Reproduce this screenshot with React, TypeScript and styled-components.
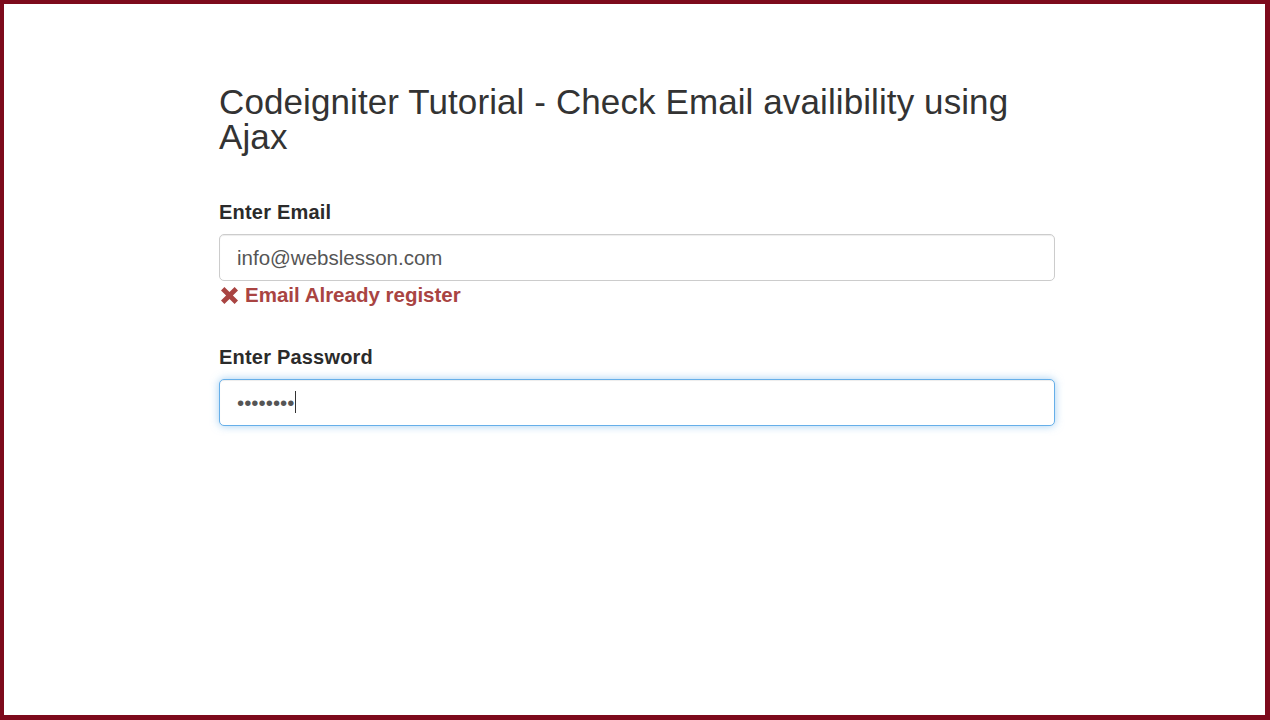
import React from "react";
import styled, { createGlobalStyle } from "styled-components";

const GlobalStyle = createGlobalStyle`
  html, body {
    margin: 0;
    padding: 0;
    background: #ffffff;
  }
  body {
    font-family: "Liberation Sans", Arial, sans-serif;
    color: #333;
  }
  * {
    box-sizing: border-box;
  }
`;

const Frame = styled.div`
  width: 1270px;
  height: 720px;
  border-style: solid;
  border-color: #7d0a1c;
  border-width: 4px 5px 5px 4px;
  background: #ffffff;
  overflow: hidden;
`;

const Container = styled.div`
  width: 836px;
  margin: 0 0 0 215px;
  padding-top: 80px;
`;

const Title = styled.h3`
  margin: 0 0 46px;
  font-size: 35px;
  font-weight: 400;
  letter-spacing: 0.1px;
  line-height: 35px;
  color: #333;
`;

const FormGroup = styled.div`
  margin-bottom: 38px;
`;

const Label = styled.label`
  display: block;
  font-size: 20px;
  font-weight: 700;
  letter-spacing: 0.2px;
  color: #2b2b2b;
  margin-bottom: 10px;
  line-height: 24px;
`;

const Field = styled.div`
  position: relative;
`;

const Input = styled.input<{ $focused?: boolean }>`
  display: block;
  width: 100%;
  height: 47px;
  padding: 0 17px;
  font-family: "Liberation Sans", Arial, sans-serif;
  font-size: 20.5px;
  color: #555;
  background: #fff;
  border: 1px solid ${(p) => (p.$focused ? "#66afe9" : "#ccc")};
  border-radius: 5px;
  outline: none;
  box-shadow: ${(p) =>
    p.$focused
      ? "inset 0 1px 1px rgba(0,0,0,.075), 0 0 8px rgba(102,175,233,.6)"
      : "inset 0 1px 1px rgba(0,0,0,.075)"};
`;

const Caret = styled.span`
  position: absolute;
  left: 76px;
  top: 12px;
  width: 1px;
  height: 22px;
  background: #333;
`;

const ErrorText = styled.div`
  display: flex;
  align-items: center;
  gap: 7px;
  margin-top: 2px;
  padding-left: 2px;
  font-size: 20.5px;
  font-weight: 700;
  line-height: 24px;
  color: #a94442;
`;

const CrossIcon = () => (
  <svg width="17" height="17" viewBox="0 0 16 16" aria-hidden>
    <polygon
      fill="#a94442"
      points="3.2,0 8,4.8 12.8,0 16,3.2 11.2,8 16,12.8 12.8,16 8,11.2 3.2,16 0,12.8 4.8,8 0,3.2"
    />
  </svg>
);

const App: React.FC = () => {
  return (
    <>
      <GlobalStyle />
      <Frame>
        <Container>
          <Title>Codeigniter Tutorial - Check Email availibility using Ajax</Title>
          <FormGroup>
            <Label>Enter Email</Label>
            <Input type="text" defaultValue="info@webslesson.com" readOnly />
            <ErrorText>
              <CrossIcon />
              Email Already register
            </ErrorText>
          </FormGroup>
          <FormGroup>
            <Label>Enter Password</Label>
            <Field>
              <Input type="password" defaultValue="12345678" $focused readOnly />
              <Caret />
            </Field>
          </FormGroup>
        </Container>
      </Frame>
    </>
  );
};

export default App;
